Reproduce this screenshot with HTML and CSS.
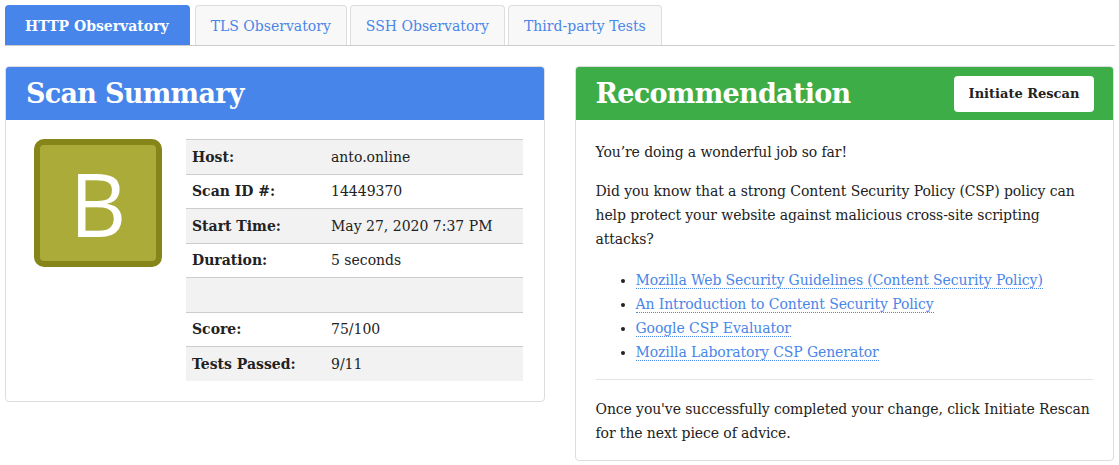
FILE: index.html
```html
<!DOCTYPE html>
<html>
<head>
<meta charset="utf-8">
<link rel="stylesheet" href="styles.css">
</head>
<body>
<nav class="tabs">
  <a class="tab active">HTTP Observatory</a>
  <a class="tab">TLS Observatory</a>
  <a class="tab">SSH Observatory</a>
  <a class="tab">Third-party Tests</a>
</nav>
<div class="row">
  <section class="card">
    <header class="card-head blue"><h2>Scan Summary</h2></header>
    <div class="card-body summary">
      <div class="grade">B</div>
      <table class="info">
        <tr><th>Host:</th><td>anto.online</td></tr>
        <tr><th>Scan ID #:</th><td>14449370</td></tr>
        <tr><th>Start Time:</th><td>May 27, 2020 7:37 PM</td></tr>
        <tr><th>Duration:</th><td>5 seconds</td></tr>
        <tr><th></th><td></td></tr>
        <tr><th>Score:</th><td>75/100</td></tr>
        <tr><th>Tests Passed:</th><td>9/11</td></tr>
      </table>
    </div>
  </section>
  <section class="card">
    <header class="card-head green"><h2>Recommendation</h2><button class="rescan">Initiate Rescan</button></header>
    <div class="card-body rec">
      <p>You’re doing a wonderful job so far!</p>
      <p>Did you know that a strong Content Security Policy (CSP) policy can help protect your website against malicious cross-site scripting attacks?</p>
      <ul>
        <li><a>Mozilla Web Security Guidelines (Content Security Policy)</a></li>
        <li><a>An Introduction to Content Security Policy</a></li>
        <li><a>Google CSP Evaluator</a></li>
        <li><a>Mozilla Laboratory CSP Generator</a></li>
      </ul>
      <hr>
      <p>Once you've successfully completed your change, click Initiate Rescan for the next piece of advice.</p>
    </div>
  </section>
</div>
</body>
</html>
```
FILE: styles.css
```css
body {
  margin: 0;
  font-family: "DejaVu Serif", Georgia, serif;
  font-size: 14px;
  color: #222;
  background: #fff;
}
.tabs {
  display: flex;
  gap: 3px;
  margin: 5px 4px 0 5px;
  border-bottom: 1px solid #ccc;
}
.tab {
  display: flex;
  align-items: center;
  height: 40px;
  padding: 0 15px;
  box-sizing: border-box;
  border: 1px solid #ddd;
  border-bottom: none;
  border-radius: 4px 4px 0 0;
  background: #f8f8f8;
  color: #4a86e8;
  font-size: 14px;
}
.tab.active {
  padding: 0 20px 0 19px;
  margin-right: 2px;
  background: #4785ea;
  border-color: #4785ea;
  color: #fff;
  font-weight: bold;
}
.row {
  display: flex;
  gap: 30px;
  margin: 20px 5px 0 5px;
  align-items: flex-start;
}
.card {
  width: 540px;
  border: 1px solid #ddd;
  border-radius: 4px;
  box-sizing: border-box;
  overflow: hidden;
}
.card-head {
  height: 53px;
  display: flex;
  align-items: center;
  justify-content: space-between;
  padding: 0 19px 0 20px;
  color: #fff;
}
.card-head h2 {
  margin: 0;
  font-family: "DejaVu Serif", serif;
  font-size: 27px;
  font-weight: bold;
  letter-spacing: -0.7px;
}
.blue { background: #4785ea; }
.green { background: #3dad48; }
.rescan {
  background: #fff;
  border: none;
  border-radius: 4px;
  width: 140px;
  height: 36px;
  font-family: "DejaVu Serif", serif;
  font-weight: bold;
  font-size: 13px;
  color: #222;
}
.card-body {
  padding: 20px;
}
.summary {
  display: flex;
  gap: 24px;
  padding: 19px 21px 20px 28px;
}
.grade {
  width: 128px;
  height: 128px;
  flex: none;
  box-sizing: border-box;
  border: 6px solid #86851a;
  border-radius: 10px;
  background: #abab3a;
  color: #fff;
  font-family: "Open Sans", sans-serif;
  font-size: 88px;
  display: flex;
  align-items: center;
  justify-content: center;
  line-height: 1;
}
.info {
  flex: 1;
  border-collapse: collapse;
}
.info tr {
  height: 34.5px;
  border-top: 1px solid #ccc;
}
.info tr:nth-child(odd) { background: #f2f2f2; }
.info th {
  text-align: left;
  width: 127px;
  padding: 0 6px;
  font-weight: bold;
}
.info td { padding: 0 6px; }
.rec {
  padding: 20px 20px 15px 20px;
  line-height: 24px;
  letter-spacing: -0.1px;
}
.rec p { margin: 0 0 15px; }
.rec p:last-child { margin: 0; }
.rec ul {
  margin: 17px 0 15px;
  padding-left: 40px;
}
.rec a {
  color: #4a86e8;
  border-bottom: 1px dotted #4a86e8;
}
.rec hr {
  border: none;
  border-top: 1px solid #e2e2e2;
  margin: 15px 0 17px;
}
```
